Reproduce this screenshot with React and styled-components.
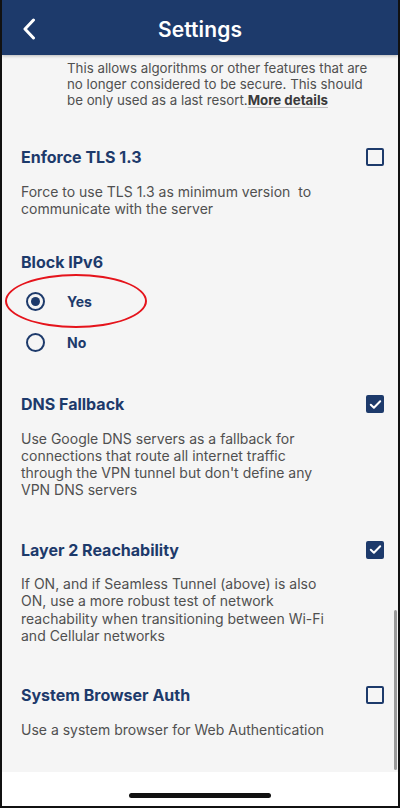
import styled, { createGlobalStyle } from "styled-components";

const GlobalStyle = createGlobalStyle`
  html, body {
    margin: 0;
    padding: 0;
    background: #ffffff;
  }
  body {
    font-family: Inter, "Noto Sans", "Liberation Sans", sans-serif;
  }
  * {
    box-sizing: border-box;
  }
`;

const NAVY = "#1d3a6b";

const settings = [
  {
    title: "Enforce TLS 1.3",
    checked: false,
    space: 39,
    text: "Force to use TLS 1.3 as minimum version  to communicate with the server",
  },
  { title: "Block IPv6", radio: true, space: 35 },
  {
    title: "DNS Fallback",
    checked: true,
    space: 40,
    text: "Use Google DNS servers as a fallback for connections that route all internet traffic through the VPN tunnel but don't define any VPN DNS servers",
  },
  {
    title: "Layer 2 Reachability",
    checked: true,
    space: 41,
    text: "If ON, and if Seamless Tunnel (above) is also ON, use a more robust test of network reachability when transitioning between Wi-Fi and Cellular networks",
  },
  {
    title: "System Browser Auth",
    checked: false,
    space: 41,
    text: "Use a system browser for Web Authentication",
  },
];

const App = () => {
  return (
    <>
      <GlobalStyle />
      <Phone>
        <Header>
          <BackButton aria-label="Back">
            <svg width="14" height="22" viewBox="0 0 14 22">
              <path d="M11.5 2 L3 11 L11.5 20" fill="none" stroke="#fff" strokeWidth="3" strokeLinecap="round" strokeLinejoin="round" />
            </svg>
          </BackButton>
          <HeaderTitle>Settings</HeaderTitle>
        </Header>
        <Content>
          <Intro>
            This allows algorithms or other features that are no longer considered to be secure. This should be only used as a last resort.
            <MoreLink>More details</MoreLink>
          </Intro>
          {settings.map((item) =>
            item.radio ? (
              <Section key={item.title} $space={item.space}>
                <TitleRow>
                  <Title>{item.title}</Title>
                </TitleRow>
                <RadioGroup>
                  <Highlight />
                  <RadioRow>
                    <Radio $selected />
                    <RadioLabel>Yes</RadioLabel>
                  </RadioRow>
                  <RadioRow>
                    <Radio />
                    <RadioLabel>No</RadioLabel>
                  </RadioRow>
                </RadioGroup>
              </Section>
            ) : (
              <Section key={item.title} $space={item.space}>
                <TitleRow>
                  <Title>{item.title}</Title>
                  <Checkbox $checked={item.checked}>
                    {item.checked && (
                      <svg width="13" height="11" viewBox="0 0 13 11">
                        <path d="M1.8 5.8 L4.9 8.8 L11.2 2.2" fill="none" stroke="#fff" strokeWidth="2" strokeLinecap="round" strokeLinejoin="round" />
                      </svg>
                    )}
                  </Checkbox>
                </TitleRow>
                <Description>{item.text}</Description>
              </Section>
            )
          )}
          <Scrollbar />
        </Content>
        <BottomBar>
          <HomeIndicator />
        </BottomBar>
      </Phone>
    </>
  );
};

export default App;

const Phone = styled.div`
  width: 400px;
  height: 808px;
  border: 2px solid #111;
  border-top: none;
  display: flex;
  flex-direction: column;
  overflow: hidden;
  background: #fff;
`;

const Header = styled.div`
  position: relative;
  height: 55px;
  flex-shrink: 0;
  background: ${NAVY};
  display: flex;
  align-items: center;
  justify-content: center;
  padding-top: 4px;
  box-shadow: 0 1px 3px rgba(0, 0, 0, 0.25);
  z-index: 2;
`;

const BackButton = styled.button`
  position: absolute;
  left: 16px;
  top: 18px;
  width: 22px;
  height: 22px;
  padding: 0;
  border: none;
  background: none;
  display: flex;
  align-items: center;
  justify-content: center;
`;

const HeaderTitle = styled.h1`
  margin: 0;
  color: #fff;
  font-size: 21px;
  font-weight: 600;
  letter-spacing: 0.1px;
`;

const Content = styled.div`
  position: relative;
  flex: 1;
  background: #f5f5f5;
  padding: 5px 14px 0 19px;
  overflow: hidden;
`;

const Intro = styled.p`
  margin: 0 0 0 46px;
  font-size: 13.3px;
  line-height: 16px;
  color: #505050;
  max-width: 305px;
`;

const MoreLink = styled.span`
  font-weight: 700;
  color: #3a3a3a;
  text-decoration: underline;
  text-decoration-color: #bdbdbd;
  text-underline-offset: 2px;
`;

const Section = styled.div`
  margin-top: ${({ $space }) => $space}px;
`;

const TitleRow = styled.div`
  display: flex;
  align-items: center;
  justify-content: space-between;
  height: 20px;
`;

const Title = styled.h2`
  margin: 0;
  font-size: 16px;
  line-height: 20px;
  font-weight: 700;
  color: ${NAVY};
`;

const Checkbox = styled.span`
  width: 18px;
  height: 18px;
  border: 2px solid ${NAVY};
  border-radius: 2px;
  background: ${({ $checked }) => ($checked ? NAVY : "transparent")};
  display: flex;
  align-items: center;
  justify-content: center;
`;

const Description = styled.p`
  margin: 15.7px 0 0;
  font-size: 14px;
  line-height: 17.2px;
  color: #505050;
  max-width: 312px;
  white-space: pre-wrap;
`;

const RadioGroup = styled.div`
  position: relative;
  margin-top: 17px;
  display: flex;
  flex-direction: column;
  gap: 17px;
`;

const Highlight = styled.span`
  position: absolute;
  left: -16px;
  top: -15px;
  width: 142px;
  height: 54px;
  border: 2.5px solid #e5141c;
  border-radius: 50%;
  pointer-events: none;
`;

const RadioRow = styled.div`
  display: flex;
  align-items: center;
  height: 24px;
`;

const Radio = styled.span`
  width: 19px;
  height: 19px;
  margin-left: 5px;
  border-radius: 50%;
  border: 2px solid ${NAVY};
  display: flex;
  align-items: center;
  justify-content: center;
  &::after {
    content: "";
    width: 9px;
    height: 9px;
    border-radius: 50%;
    background: ${({ $selected }) => ($selected ? NAVY : "transparent")};
  }
`;

const RadioLabel = styled.span`
  margin-left: 22px;
  font-size: 14px;
  font-weight: 700;
  color: ${NAVY};
`;

const Scrollbar = styled.span`
  position: absolute;
  right: 1px;
  top: 555px;
  width: 3.5px;
  height: 160px;
  border-radius: 2px;
  background: #9a9a9a;
`;

const BottomBar = styled.div`
  height: 34px;
  flex-shrink: 0;
  background: #fff;
  display: flex;
  justify-content: center;
  padding-top: 21px;
`;

const HomeIndicator = styled.span`
  width: 142px;
  height: 5px;
  border-radius: 3px;
  background: #111;
`;
